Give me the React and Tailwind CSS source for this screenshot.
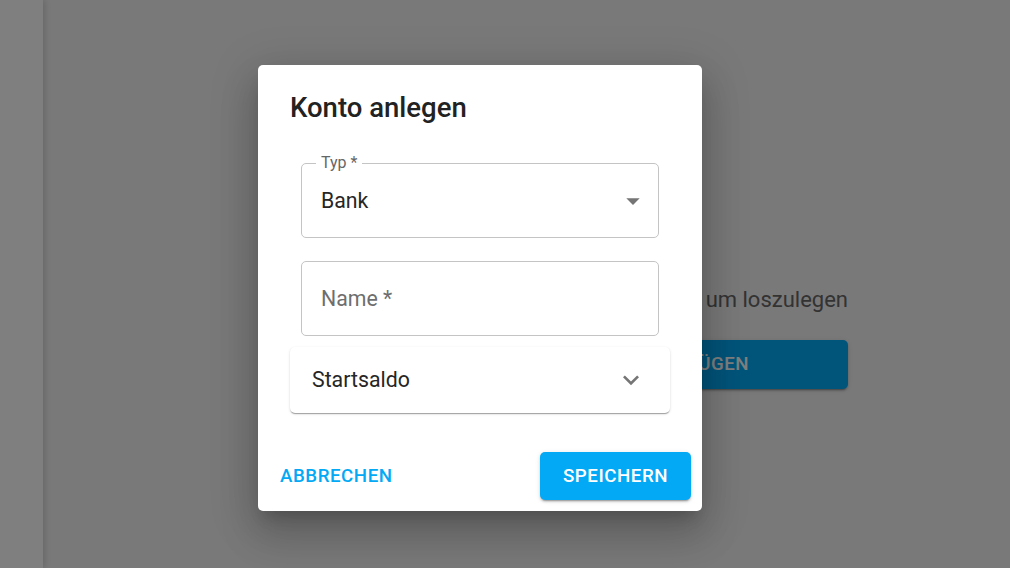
import { useState } from 'react';

function ArrowDropDown() {
  return (
    <svg viewBox="0 0 24 24" className="w-[32px] h-[32px] fill-[#757575]">
      <path d="M7 10l5 5 5-5z" />
    </svg>
  );
}

function ExpandMore() {
  return (
    <svg viewBox="0 0 24 24" className="w-[32px] h-[32px] fill-[#757575]">
      <path d="M16.59 8.59 12 13.17 7.41 8.59 6 10l6 6 6-6z" />
    </svg>
  );
}

export default function App() {
  const [typ] = useState('Bank');
  const [name, setName] = useState('');

  return (
    <div className="relative w-[1010px] h-[568px] overflow-hidden flex font-['Roboto',sans-serif] bg-[#f2f2f4]">
      {/* sidebar */}
      <div className="w-[43px] h-full bg-white shadow-[2px_0_6px_rgba(0,0,0,0.14)] z-10" />

      {/* main content behind the dialog */}
      <main className="flex-1 flex flex-col items-end pr-[162px] pt-[284px]">
        <p className="text-[22px] leading-[32px] text-[#666]">Füge ein Konto hinzu um loszulegen</p>
        <button className="mt-[24px] w-[387px] h-[49px] rounded-[5px] bg-[#03a9f4] text-white text-[18.7px] font-medium tracking-[0.03em] uppercase shadow-[0_3px_1px_-2px_rgba(0,0,0,0.2),0_2px_2px_0_rgba(0,0,0,0.14),0_1px_5px_0_rgba(0,0,0,0.12)]">
          Konto hinzufügen
        </button>
      </main>

      {/* modal */}
      <div className="absolute inset-0 z-20 bg-black/50 flex items-center justify-center pr-[50px] pt-[8px]">
        <div className="w-[444px] rounded-[5px] bg-white flex flex-col shadow-[0_11px_15px_-7px_rgba(0,0,0,0.2),0_24px_38px_3px_rgba(0,0,0,0.14),0_9px_46px_8px_rgba(0,0,0,0.12)]">
          <h2 className="px-[32px] pt-[21px] text-[27.5px] leading-[43px] font-medium text-[#222]">
            Konto anlegen
          </h2>

          <div className="px-[32px] pt-[34px] flex flex-col">
            {/* Typ select */}
            <div className="relative mx-[11px] h-[75px] rounded-[5px] border border-[#c4c4c4] flex items-center justify-between pl-[19px] pr-[9px]">
              <span className="absolute left-[14px] top-[-11px] px-[5px] bg-white text-[16px] leading-[20px] text-[#666]">
                Typ *
              </span>
              <span className="text-[21.3px] text-[#262626]">{typ}</span>
              <ArrowDropDown />
            </div>

            {/* Name */}
            <div className="mx-[11px] mt-[23px] h-[75px] rounded-[5px] border border-[#c4c4c4] flex items-center pl-[19px] pr-[19px]">
              <input
                className="w-full outline-none text-[21.3px] text-[#262626] placeholder:text-[#6e6e6e] bg-transparent"
                placeholder="Name *"
                value={name}
                onChange={(e) => setName(e.target.value)}
              />
            </div>

            {/* Startsaldo accordion */}
            <div className="mt-[11px] h-[66px] rounded-[5px] bg-white flex items-center justify-between pl-[22px] pr-[23px] shadow-[0_2px_1px_-1px_rgba(0,0,0,0.2),0_1px_1px_0_rgba(0,0,0,0.14),0_1px_3px_0_rgba(0,0,0,0.12)]">
              <span className="text-[21.3px] text-[#262626]">Startsaldo</span>
              <ExpandMore />
            </div>
          </div>

          <div className="mt-[28px] p-[11px] flex items-center justify-between">
            <button className="h-[48px] px-[11px] rounded-[5px] text-[#03a9f4] text-[18.7px] font-medium tracking-[0.03em] uppercase">
              Abbrechen
            </button>
            <button className="h-[48px] w-[151px] rounded-[5px] bg-[#03a9f4] text-white text-[18.7px] font-medium tracking-[0.03em] uppercase shadow-[0_3px_1px_-2px_rgba(0,0,0,0.2),0_2px_2px_0_rgba(0,0,0,0.14),0_1px_5px_0_rgba(0,0,0,0.12)]">
              Speichern
            </button>
          </div>
        </div>
      </div>
    </div>
  );
}
